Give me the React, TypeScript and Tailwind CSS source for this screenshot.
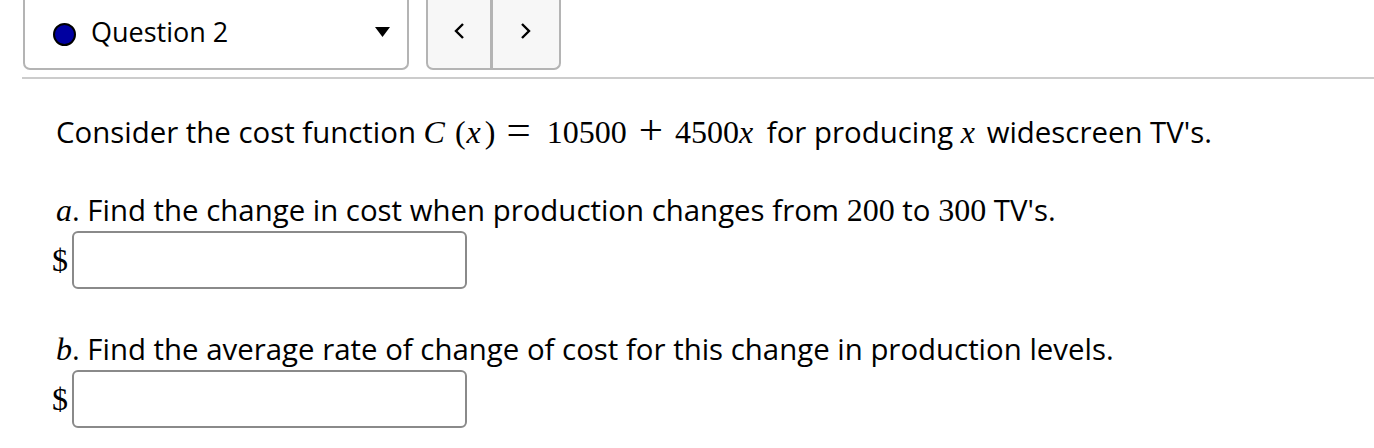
import React from "react";

const serif = '"Liberation Serif", "DejaVu Serif", serif';

const M = ({ children, italic, className = "" }: { children: React.ReactNode; italic?: boolean; className?: string }) => (
  <span
    className={`inline-block text-[32px] leading-none ${italic ? "italic" : ""} ${className}`}
    style={{ fontFamily: serif }}
  >
    {children}
  </span>
);

const Op = ({ children, className = "" }: { children: React.ReactNode; className?: string }) => (
  <span
    className={`inline-block text-[43px] leading-[0] relative top-[1px] ${className}`}
    style={{ fontFamily: serif }}
  >
    {children}
  </span>
);

function AnswerRow() {
  return (
    <div className="flex items-center -ml-[4px]">
      <span className="w-[20px] text-[32px] leading-none text-black" style={{ fontFamily: serif }}>
        $
      </span>
      <input
        className="w-[395px] h-[58px] border-2 border-[#8a8a8a] rounded-[6px] bg-white outline-none"
        type="text"
      />
    </div>
  );
}

export default function App() {
  return (
    <div
      className="w-[1374px] h-[448px] bg-white text-black overflow-hidden"
      style={{ fontFamily: '"Open Sans", "Noto Sans", sans-serif' }}
    >
      <div className="flex pl-[23px] gap-[17px]">
        <div className="w-[386px] h-[70px] border-x-2 border-b-2 border-[#b4b4b4] rounded-b-[7px] flex items-center pl-[28px] pr-[17px]">
          <span className="w-[23px] h-[23px] rounded-full bg-[#0000a0] border-2 border-black" />
          <span className="ml-[15px] text-[27px] leading-none pb-[5px]">Question 2</span>
          <svg className="ml-auto mb-[5px]" width="15" height="10" viewBox="0 0 15 10">
            <path d="M0 0 H15 L7.5 10 Z" fill="black" />
          </svg>
        </div>
        <div className="w-[135px] h-[70px] border-x-2 border-b-2 border-[#b4b4b4] rounded-b-[7px] bg-[#f7f7f7] flex">
          <div className="w-[65px] flex items-center justify-center border-r-[3px] border-[#b4b4b4] pb-[6px]">
            <svg width="12" height="16" viewBox="0 0 12 16">
              <path d="M10 1 L3 8 L10 15" fill="none" stroke="black" strokeWidth="2.4" />
            </svg>
          </div>
          <div className="flex-1 flex items-center justify-center pb-[6px]">
            <svg width="12" height="16" viewBox="0 0 12 16">
              <path d="M2 1 L9 8 L2 15" fill="none" stroke="black" strokeWidth="2.4" />
            </svg>
          </div>
        </div>
      </div>
      <div className="ml-[22px] mt-[7px] h-[2px] bg-[#cccccc]" />
      <div className="pl-[56px] pt-[33px]">
        <p className="h-[40px] text-[29.4px] leading-[40px] whitespace-nowrap">
          Consider the cost function <M italic>C</M>
          <M className="ml-[10px]">(</M>
          <M italic className="ml-[1px] pr-[3px]">x</M>
          <M className="ml-[1px]">)</M>
          <Op className="ml-[11px]">=</Op>
          <M className="ml-[16px]">10500</M>
          <Op className="ml-[12px]">+</Op>
          <M className="ml-[12px]">4500</M>
          <M italic className="pr-[6px]">x</M> for producing <M italic className="pr-[4px]">x</M> widescreen TV's.
        </p>
        <p className="h-[40px] mt-[38px] text-[29.4px] leading-[40px] whitespace-nowrap">
          <M italic>a</M>. Find the change in cost when production changes from <M>200</M> to <M>300</M> TV's.
        </p>
        <div className="mt-[1px]">
          <AnswerRow />
        </div>
        <p className="h-[40px] mt-[40px] text-[29.4px] leading-[40px] whitespace-nowrap">
          <M italic>b</M>. Find the average rate of change of cost for this change in production levels.
        </p>
        <div className="mt-[1px]">
          <AnswerRow />
        </div>
      </div>
    </div>
  );
}
